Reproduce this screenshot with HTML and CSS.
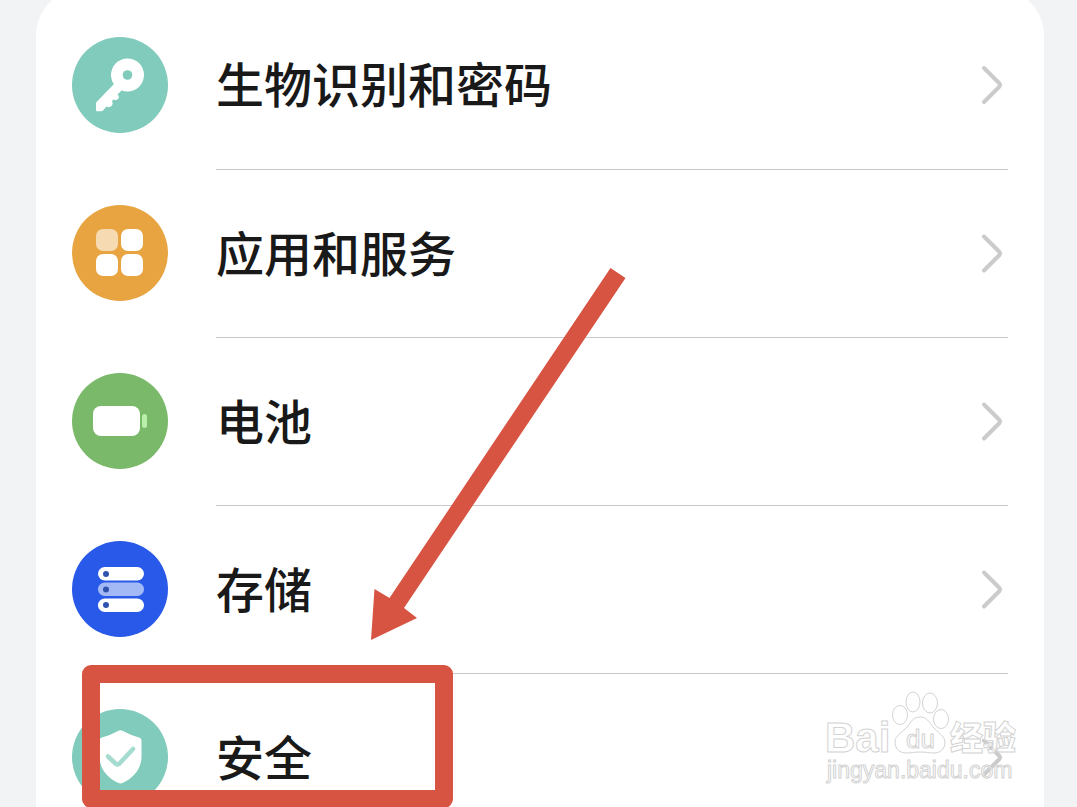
FILE: index.html
```html
<!DOCTYPE html>
<html lang="zh-CN">
<head>
<meta charset="UTF-8">
<meta name="viewport" content="width=device-width, initial-scale=1.0">
<title>设置</title>
<link rel="stylesheet" href="styles.css">
</head>

<body>
  <main class="screen">
    <ul class="card">
      <li>
        <a class="row" href="#biometrics">
          <svg class="icon teal" viewBox="0 0 96 96" aria-hidden="true">
            <path fill="#fff" d="M43 46l7 7-4.500 4.500q2.500 2.500.5 4.500t-4.500.5l-1.500 1.500q1.500 3-.5 5t-5 .5L31 73.500q-.8.700-1.600.7H25q-1 0-1-1V66.500q0-1 .8-1.800z"/>
            <circle cx="55.500" cy="38" r="16.500" fill="#fff"/>
            <circle cx="55.500" cy="38" r="4.800" fill="#80cbbc"/>
          </svg>
          <span class="label">生物识别和密码</span>
          <svg class="chevron" viewBox="0 0 24 42" aria-hidden="true"><path d="M3 4l15 15q2 2 0 4L3 38"/></svg>
        </a>
      </li>
      <li>
        <a class="row" href="#apps">
          <svg class="icon orange" viewBox="0 0 96 96" aria-hidden="true">
            <g fill="#fff">
              <rect x="24" y="24" width="22" height="22" rx="7" fill-opacity=".6"/>
              <rect x="49" y="24" width="22" height="22" rx="7"/>
              <rect x="24" y="49" width="22" height="22" rx="7"/>
              <rect x="49" y="49" width="22" height="22" rx="7"/>
            </g>
          </svg>
          <span class="label">应用和服务</span>
          <svg class="chevron" viewBox="0 0 24 42" aria-hidden="true"><path d="M3 4l15 15q2 2 0 4L3 38"/></svg>
        </a>
      </li>
      <li>
        <a class="row" href="#battery">
          <svg class="icon green" viewBox="0 0 96 96" aria-hidden="true">
            <rect x="21" y="33" width="47" height="30" rx="8" fill="#fff"/>
            <rect x="70" y="41" width="5" height="14" rx="2.500" fill="#b9efab"/>
          </svg>
          <span class="label">电池</span>
          <svg class="chevron" viewBox="0 0 24 42" aria-hidden="true"><path d="M3 4l15 15q2 2 0 4L3 38"/></svg>
        </a>
      </li>
      <li>
        <a class="row" href="#storage">
          <svg class="icon blue" viewBox="0 0 96 96" aria-hidden="true">
            <rect x="26" y="26" width="46" height="13.500" rx="6.750" fill="#fff"/>
            <rect x="26" y="41.500" width="46" height="13.500" rx="6.750" fill="#a2b9f6"/>
            <rect x="26" y="57.500" width="46" height="13.500" rx="6.750" fill="#fff"/>
            <g fill="#3153b0">
              <circle cx="34" cy="33" r="3"/>
              <circle cx="34" cy="48.500" r="3"/>
              <circle cx="34" cy="64" r="3"/>
            </g>
          </svg>
          <span class="label">存储</span>
          <svg class="chevron" viewBox="0 0 24 42" aria-hidden="true"><path d="M3 4l15 15q2 2 0 4L3 38"/></svg>
        </a>
      </li>
      <li>
        <a class="row" href="#security">
          <svg class="icon teal" viewBox="0 0 96 96" aria-hidden="true">
            <path fill="#fff" d="M46.500 21.800q2-1 4 0Q58 26 67 28.500q2.500.7 2.500 3V48C69.500 59 62 69 50.500 74q-2 .8-4 0C35 69 27.500 59 27.500 48V31.500q0-2.300 2.500-3Q39 26 46.500 21.800z"/>
            <path fill="none" stroke="#a5dccf" stroke-width="4.500" stroke-linecap="round" stroke-linejoin="round" d="M36 47.500l8 7.500q1.500 1 3 0L61 40"/>
          </svg>
          <span class="label">安全</span>
          <svg class="chevron" viewBox="0 0 24 42" aria-hidden="true"><path d="M3 4l15 15q2 2 0 4L3 38"/></svg>
        </a>
      </li>
    </ul>

    <!-- tutorial marks over the list -->
    <svg class="arrow" viewBox="0 0 256 374" aria-hidden="true">
      <path d="M240.500 0L255.500 10 34 340 47 350 1 372 4.500 321 19.500 330z"/>
    </svg>
    <div class="highlight"></div>

    <svg class="watermark" viewBox="0 0 200 96" role="img" aria-label="Baidu经验">
      <ellipse cx="76" cy="24" rx="7.500" ry="9.500"/>
      <ellipse cx="89" cy="11" rx="7" ry="10"/>
      <ellipse cx="106" cy="12" rx="7.500" ry="10"/>
      <ellipse cx="117" cy="28" rx="7.500" ry="9.500"/>
      <path d="M96 26c7 0 9 5 13 10s12 9 12 15c0 8-6 11-11 11-5 0-8-1-14-1s-9 1-14 1c-6 0-11-4-11-11 0-7 8-10 12-15s6-10 13-10z"/>
      <text class="wm-bai" x="1" y="61">Bai</text>
      <text class="wm-du" x="82" y="57">du</text>
      <text class="wm-cn" x="126" y="59">经验</text>
      <text class="wm-url" x="3" y="87">jingyan.baidu.com</text>
    </svg>
  </main>
</body>
</html>
```
FILE: styles.css
```css
* {
  box-sizing: border-box;
  margin: 0;
  padding: 0;
}

body {
  font-family: "Noto Sans CJK SC", sans-serif;
  background-color: #f1f3f5;
  color: #191919;
}

.screen {
  position: relative;
  height: 100vh;
  overflow: hidden;
  padding: 0 33px 0 36px;
}

.card {
  list-style: none;
  margin-top: -12px;
  padding: 13px 36px 48px;
  border-radius: 48px;
  background-color: #fff;
}

.row {
  display: flex;
  align-items: center;
  height: 168px;
  color: inherit;
  text-decoration: none;
}

.icon {
  flex: none;
  width: 96px;
  height: 96px;
  margin-right: 48px;
  border-radius: 50%;
}

.teal {
  background-color: #80cbbc;
}

.orange {
  background-color: #e8a440;
}

.green {
  background-color: #7ab96a;
}

.blue {
  background-color: #2859e9;
}

.label {
  flex: 1;
  height: 168px;
  font-size: 48px;
  font-weight: 500;
  line-height: 162px;
}

.chevron {
  flex: none;
  align-self: stretch;
  width: 30px;
  height: 168px;
  padding: 0 3px;
  fill: none;
  stroke: #cbcbcb;
  stroke-width: 4;
  stroke-linecap: round;
}

/* divider starts at the label, not under the icon */
li + li .label,
li + li .chevron {
  border-top: 1px solid #c9c9c9;
}

.arrow {
  position: absolute;
  top: 268px;
  left: 370px;
  width: 256px;
  height: 374px;
  fill: #d75442;
}

.highlight {
  position: absolute;
  top: 665px;
  left: 82px;
  width: 371px;
  height: 143px;
  border: 18px solid #d75442;
  border-radius: 9px;
}

.watermark {
  position: absolute;
  top: 691px;
  right: 53px;
  width: 200px;
  height: 96px;
  fill: rgba(255, 255, 255, 0.6);
  stroke: #d3d3d3;
  stroke-width: 1;
}

.wm-bai,
.wm-du,
.wm-url {
  font-family: "Liberation Sans", sans-serif;
}

.wm-bai {
  font-size: 42px;
  font-weight: bold;
}

.wm-du {
  font-size: 26px;
}

.wm-cn {
  font-size: 33px;
  font-weight: 900;
}

.wm-url {
  font-size: 23px;
}
```
